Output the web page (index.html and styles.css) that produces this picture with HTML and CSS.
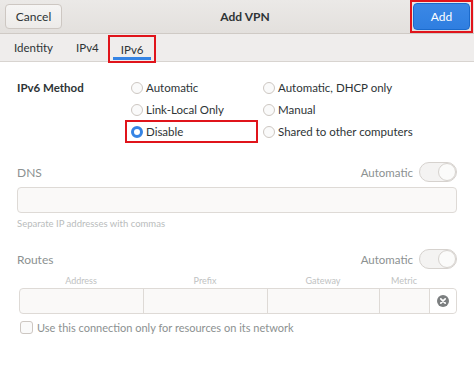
FILE: index.html
```html
<!DOCTYPE html>
<html>
<head>
<meta charset="utf-8">
<link rel="stylesheet" href="styles.css">
</head>
<body>
<div class="dialog">
  <header class="headerbar">
    <button class="btn cancel">Cancel</button>
    <div class="title">Add VPN</div>
    <div class="add-wrap"><button class="btn add">Add</button></div>
  </header>
  <nav class="tabs">
    <div class="tab">Identity</div>
    <div class="tab">IPv4</div>
    <div class="tab active"><span>IPv6</span></div>
  </nav>
  <main class="content">
    <section class="method">
      <div class="method-label">IPv6 Method</div>
      <div class="radios">
        <label class="radio"><span class="dot"></span>Automatic</label>
        <label class="radio"><span class="dot"></span>Automatic, DHCP only</label>
        <label class="radio"><span class="dot"></span>Link-Local Only</label>
        <label class="radio"><span class="dot"></span>Manual</label>
        <label class="radio checked highlight"><span class="dot"></span>Disable</label>
        <label class="radio"><span class="dot"></span>Shared to other computers</label>
      </div>
    </section>
    <section class="dns">
      <div class="sec-head">
        <span class="sec-label">DNS</span>
        <span class="auto">Automatic <span class="switch"><span class="knob"></span></span></span>
      </div>
      <div class="entry"></div>
      <div class="hint">Separate IP addresses with commas</div>
    </section>
    <section class="routes">
      <div class="sec-head">
        <span class="sec-label">Routes</span>
        <span class="auto">Automatic <span class="switch"><span class="knob"></span></span></span>
      </div>
      <div class="cols">
        <span class="c1">Address</span><span class="c2">Prefix</span><span class="c3">Gateway</span><span class="c4">Metric</span><span class="c5"></span>
      </div>
      <div class="route-row">
        <div class="cell c1"></div><div class="cell c2"></div><div class="cell c3"></div><div class="cell c4"></div>
        <div class="cell c5"><svg width="12" height="12" viewBox="0 0 12 12"><circle cx="6" cy="6" r="6" fill="#7c7f80"/><path d="M3.8 3.8 L8.2 8.2 M8.2 3.8 L3.8 8.2" stroke="#fff" stroke-width="1.7" stroke-linecap="round"/></svg></div>
      </div>
      <label class="check"><span class="box"></span>Use this connection only for resources on its network</label>
    </section>
  </main>
</div>
</body>
</html>
```
FILE: styles.css
```css
* { box-sizing: border-box; }
html, body { margin: 0; padding: 0; }
body {
  width: 474px; height: 369px; overflow: hidden;
  background: #ffffff;
  font-family: "Lato", "Noto Sans", sans-serif;
  font-size: 11.5px;
  color: #2e3436;
}
.dialog { display: flex; flex-direction: column; height: 369px; }
.headerbar {
  height: 34px;
  display: flex; align-items: center; justify-content: space-between;
  padding: 0 1px 0 5px;
  background: linear-gradient(#ebe9e7, #e3e0dd);
  border-bottom: 1px solid #cfcac5;
  position: relative;
}
.btn {
  font-family: inherit; font-size: 12px;
  border-radius: 4px;
  cursor: default;
}
.cancel {
  width: 57px; height: 25px;
  border: 1px solid #cdc7c2;
  background: linear-gradient(#f6f5f4, #edebe9);
  color: #2e3436;
}
.title {
  position: absolute; left: 0; right: 0; text-align: center;
  font-weight: bold; font-size: 12px; pointer-events: none;
  padding-left: 16px;
}
.add-wrap {
  border: 2px solid #e0141b;
  padding: 1px;
  height: 33px;
  margin-top: -1px;
}
.add {
  width: 57px; height: 27px;
  border: 1px solid #1b6acb;
  background: linear-gradient(#3a88e6, #2f7ee0);
  color: #fff;
}
.tabs {
  height: 28px;
  display: flex; align-items: stretch;
  padding-left: 14px;
  background: #efedec;
  border-bottom: 1px solid #d8d4d0;
}
.tab {
  display: flex; align-items: center;
  margin-right: 23px;
}
.tab.active {
  border: 2px solid #e0141b;
  margin-left: -14px;
  padding: 0 10px 0 11px;
  height: 28px;
  margin-top: 1px;
  position: relative;
}
.tab.active::after {
  content: ""; position: absolute;
  left: 3px; right: 3px; bottom: 1px; height: 3px;
  background: #3584e4;
}
.content { padding: 0 17px; flex: 1; }
.method { display: flex; padding-top: 16px; }
.method-label { width: 114px; font-weight: bold; height: 19px; line-height: 19px; }
.radios {
  display: grid; grid-template-columns: 132px 190px;
  row-gap: 3px;
}
.radio {
  display: flex; align-items: center; gap: 3px;
  height: 19px; white-space: nowrap;
}
.dot {
  width: 12px; height: 12px; border-radius: 50%;
  border: 1px solid #cdc7c2; background: #fafafa;
  flex: none;
}
.radio.checked .dot { border: 3px solid #3584e4; background: #fff; }
.radio.highlight {
  outline: 2px solid #e0141b;
  outline-offset: 0;
  margin-left: -4px; padding-left: 4px;
  width: 129px;
}
.sec-head {
  display: flex; justify-content: space-between; align-items: center;
  height: 22px;
}
.sec-label { color: #8c9191; font-size: 12px; }
.auto { display: flex; align-items: center; gap: 6px; color: #8c9191; }
.switch {
  width: 38px; height: 20px; border-radius: 10px;
  border: 1px solid #d6d2ce; background: #f4f3f2;
  display: flex; justify-content: flex-end;
}
.knob {
  width: 18px; height: 18px; border-radius: 50%;
  border: 1px solid #d6d2ce; background: #fbfbfa;
}
.dns { margin-top: 20px; }
.entry {
  height: 26px; margin-top: 4px;
  border: 1px solid #dedad6; border-radius: 4px;
  background: #faf9f8;
}
.hint { font-size: 9.5px; color: #b9bcbc; margin-top: 5px; }
.routes { margin-top: 19px; }
.cols {
  display: flex; font-size: 9px; color: #c0c2c2;
  margin: 5px 0 0 2px; height: 12px; line-height: 12px;
}
.c1 { width: 124px; text-align: center; }
.c2 { width: 124px; text-align: center; }
.c3 { width: 112px; text-align: center; }
.c4 { width: 50px; text-align: center; }
.c5 { width: 26px; }
.route-row {
  display: flex; height: 26px; margin: 1px 0 0 2px; width: 438px;
  border: 1px solid #dedad6; border-radius: 4px; background: #faf9f8;
}
.cell { border-right: 1px solid #dedad6; }
.cell.c5 { border-right: none; background: #fff; display: flex; align-items: center; justify-content: center; border-radius: 0 4px 4px 0; }
.check {
  display: flex; align-items: center; gap: 4px;
  margin: 7px 0 0 3px; color: #8c9191; font-size: 11px;
}
.box {
  width: 13px; height: 13px; border: 1px solid #cdc7c2; border-radius: 3px; background: #fafafa;
}
```
